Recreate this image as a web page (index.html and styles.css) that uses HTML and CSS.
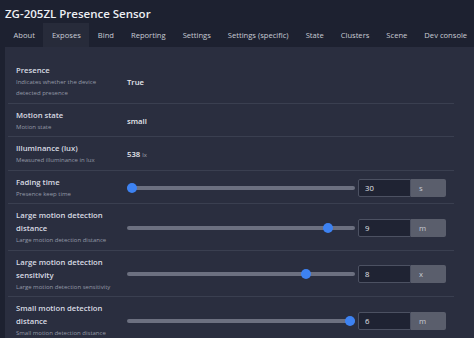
FILE: index.html
```html
<!DOCTYPE html>
<html lang="en">
<head>
    <meta charset="UTF-8">
    <meta name="viewport" content="width=device-width, initial-scale=1.0">
    <title>ZG-205ZL Presence Sensor</title>
    <link rel="stylesheet" href="styles.css">
</head>
<body>
    <div class="header">
        <h1 class="device-title">ZG-205ZL Presence Sensor</h1>
        <nav class="tabs">
            <a class="tab">About</a>
            <a class="tab active">Exposes</a>
            <a class="tab">Bind</a>
            <a class="tab">Reporting</a>
            <a class="tab">Settings</a>
            <a class="tab">Settings (specific)</a>
            <a class="tab">State</a>
            <a class="tab">Clusters</a>
            <a class="tab">Scene</a>
            <a class="tab">Dev console</a>
        </nav>
    </div>

    <div class="panel">
        <div class="row">
            <div class="label">
                <div class="name">Presence</div>
                <div class="desc">Indicates whether the device<br>detected presence</div>
            </div>
            <div class="value">True</div>
        </div>

        <div class="row">
            <div class="label">
                <div class="name">Motion state</div>
                <div class="desc">Motion state</div>
            </div>
            <div class="value">small</div>
        </div>

        <div class="row">
            <div class="label">
                <div class="name">Illuminance (lux)</div>
                <div class="desc">Measured illuminance in lux</div>
            </div>
            <div class="value">538 <span class="unit-text">lx</span></div>
        </div>

        <div class="row">
            <div class="label">
                <div class="name">Fading time</div>
                <div class="desc">Presence keep time</div>
            </div>
            <div class="control">
                <input type="range" class="slider" min="30" max="300" value="30">
                <input type="text" class="number" value="30">
                <span class="unit">s</span>
            </div>
        </div>

        <div class="row">
            <div class="label">
                <div class="name">Large motion detection distance</div>
                <div class="desc">Large motion detection distance</div>
            </div>
            <div class="control">
                <input type="range" class="slider" min="0" max="10" value="9">
                <input type="text" class="number" value="9">
                <span class="unit">m</span>
            </div>
        </div>

        <div class="row">
            <div class="label">
                <div class="name">Large motion detection sensitivity</div>
                <div class="desc">Large motion detection sensitivity</div>
            </div>
            <div class="control">
                <input type="range" class="slider" min="0" max="10" value="8">
                <input type="text" class="number" value="8">
                <span class="unit">x</span>
            </div>
        </div>

        <div class="row">
            <div class="label">
                <div class="name">Small motion detection distance</div>
                <div class="desc">Small motion detection distance</div>
            </div>
            <div class="control">
                <input type="range" class="slider" min="0" max="6" value="6">
                <input type="text" class="number" value="6">
                <span class="unit">m</span>
            </div>
        </div>
    </div>
</body>
</html>
```

FILE: styles.css
```css
body {
    margin: 0;
    background-color: #1d2130;
    font-family: "Open Sans", "Noto Sans", sans-serif;
    color: #d6d9e0;
    overflow: hidden;
}

.header {
    padding: 4px 0 0 5px;
}

.device-title {
    margin: 0;
    font-size: 11.5px;
    font-weight: 600;
    line-height: 19px;
    color: #eef0f4;
}

.tabs {
    display: flex;
    height: 24px;
}

.tab {
    padding: 0 8.5px;
    font-size: 7.6px;
    line-height: 24px;
    color: #c9ccd5;
    white-space: nowrap;
}

.tab.active {
    background-color: #272b3a;
}

.panel {
    margin-left: 5px;
    padding: 12px 20px 0 3px;
    background-color: #2a2e3f;
    min-height: 300px;
}

.row {
    display: grid;
    grid-template-columns: 111px 1fr;
    align-items: center;
    padding: 5px 8px 3.5px 8px;
    border-bottom: 1px solid #3a3f50;
}

.name {
    font-size: 7.7px;
    font-weight: 600;
    line-height: 13px;
    color: #d8dbe2;
    padding-right: 6px;
}

.desc {
    font-size: 6px;
    line-height: 11px;
    color: #959aa7;
}

.value {
    font-size: 7.7px;
    font-weight: 600;
    color: #e6e8ee;
}

.unit-text {
    font-size: 6px;
    font-weight: 400;
    color: #a3a8b4;
}

.control {
    display: flex;
    align-items: center;
}

.slider {
    -webkit-appearance: none;
    appearance: none;
    width: 228px;
    height: 18px;
    margin: 0 3px 0 0;
    background: transparent;
}

.slider::-webkit-slider-runnable-track {
    height: 4px;
    border-radius: 2px;
    background-color: #6c7080;
}

.slider::-webkit-slider-thumb {
    -webkit-appearance: none;
    width: 10px;
    height: 10px;
    margin-top: -3px;
    border-radius: 50%;
    background-color: #3d82f2;
    border: none;
}

.number {
    box-sizing: border-box;
    width: 53px;
    height: 18px;
    margin: 0;
    padding: 0 0 0 6px;
    border: 1px solid #4c5162;
    border-radius: 2px 0 0 2px;
    background-color: #1f2333;
    color: #e0e3e9;
    font-family: inherit;
    font-size: 7.7px;
}

.unit {
    box-sizing: border-box;
    width: 35px;
    height: 18px;
    padding-left: 8px;
    border-radius: 0 2px 2px 0;
    background-color: #5a5e6c;
    color: #c8cbd3;
    font-size: 7.7px;
    line-height: 18px;
}
```
